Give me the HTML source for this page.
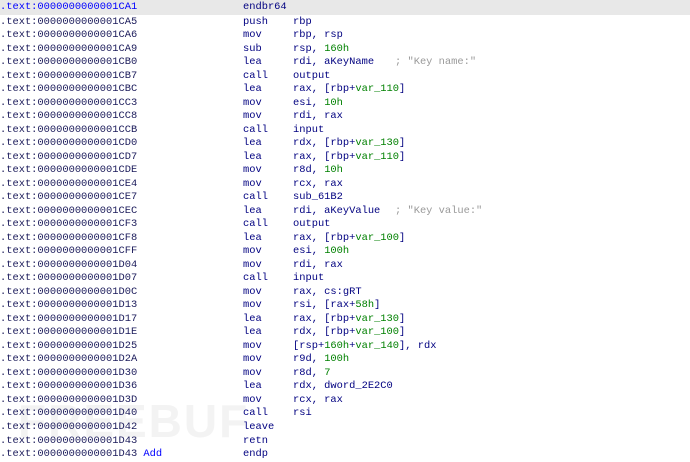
<!DOCTYPE html>
<html><head><style>
body{margin:0;padding-top:1px;background:#fff;width:690px;height:461px;overflow:hidden;font-family:"Liberation Mono",monospace;font-size:10.4px;color:#000080}
.r{height:13.52px;line-height:13.52px;white-space:pre;position:relative}
.r span{position:absolute;top:1px}
.a{left:0;color:#1a1a5a}
.m{left:243px}
.o{left:293px}
.c{left:395px;color:#999}
.g{color:#008000;font-style:normal;font-weight:normal}
.hl{background:#e8e8e8;margin-top:-1px;padding-top:1px}
.hl .a{color:#0000ff}
.wm{position:absolute;left:18px;top:394px;font:bold 46px "Liberation Sans",sans-serif;color:#f3f3f3;letter-spacing:2px;z-index:-1}
</style></head><body>
<div class="wm">FREEBUF</div>
<div class="r hl"><span class="a">.text:0000000000001CA1</span><span class="m">endbr64</span></div>
<div class="r"><span class="a">.text:0000000000001CA5</span><span class="m">push</span><span class="o">rbp</span></div>
<div class="r"><span class="a">.text:0000000000001CA6</span><span class="m">mov</span><span class="o">rbp, rsp</span></div>
<div class="r"><span class="a">.text:0000000000001CA9</span><span class="m">sub</span><span class="o">rsp, <i class="g">160h</i></span></div>
<div class="r"><span class="a">.text:0000000000001CB0</span><span class="m">lea</span><span class="o">rdi, aKeyName</span><span class="c">; "Key name:"</span></div>
<div class="r"><span class="a">.text:0000000000001CB7</span><span class="m">call</span><span class="o">output</span></div>
<div class="r"><span class="a">.text:0000000000001CBC</span><span class="m">lea</span><span class="o">rax, [rbp+<i class="g">var_110</i>]</span></div>
<div class="r"><span class="a">.text:0000000000001CC3</span><span class="m">mov</span><span class="o">esi, <i class="g">10h</i></span></div>
<div class="r"><span class="a">.text:0000000000001CC8</span><span class="m">mov</span><span class="o">rdi, rax</span></div>
<div class="r"><span class="a">.text:0000000000001CCB</span><span class="m">call</span><span class="o">input</span></div>
<div class="r"><span class="a">.text:0000000000001CD0</span><span class="m">lea</span><span class="o">rdx, [rbp+<i class="g">var_130</i>]</span></div>
<div class="r"><span class="a">.text:0000000000001CD7</span><span class="m">lea</span><span class="o">rax, [rbp+<i class="g">var_110</i>]</span></div>
<div class="r"><span class="a">.text:0000000000001CDE</span><span class="m">mov</span><span class="o">r8d, <i class="g">10h</i></span></div>
<div class="r"><span class="a">.text:0000000000001CE4</span><span class="m">mov</span><span class="o">rcx, rax</span></div>
<div class="r"><span class="a">.text:0000000000001CE7</span><span class="m">call</span><span class="o">sub_61B2</span></div>
<div class="r"><span class="a">.text:0000000000001CEC</span><span class="m">lea</span><span class="o">rdi, aKeyValue</span><span class="c">; "Key value:"</span></div>
<div class="r"><span class="a">.text:0000000000001CF3</span><span class="m">call</span><span class="o">output</span></div>
<div class="r"><span class="a">.text:0000000000001CF8</span><span class="m">lea</span><span class="o">rax, [rbp+<i class="g">var_100</i>]</span></div>
<div class="r"><span class="a">.text:0000000000001CFF</span><span class="m">mov</span><span class="o">esi, <i class="g">100h</i></span></div>
<div class="r"><span class="a">.text:0000000000001D04</span><span class="m">mov</span><span class="o">rdi, rax</span></div>
<div class="r"><span class="a">.text:0000000000001D07</span><span class="m">call</span><span class="o">input</span></div>
<div class="r"><span class="a">.text:0000000000001D0C</span><span class="m">mov</span><span class="o">rax, cs:gRT</span></div>
<div class="r"><span class="a">.text:0000000000001D13</span><span class="m">mov</span><span class="o">rsi, [rax+<i class="g">58h</i>]</span></div>
<div class="r"><span class="a">.text:0000000000001D17</span><span class="m">lea</span><span class="o">rax, [rbp+<i class="g">var_130</i>]</span></div>
<div class="r"><span class="a">.text:0000000000001D1E</span><span class="m">lea</span><span class="o">rdx, [rbp+<i class="g">var_100</i>]</span></div>
<div class="r"><span class="a">.text:0000000000001D25</span><span class="m">mov</span><span class="o">[rsp+<i class="g">160h</i>+<i class="g">var_140</i>], rdx</span></div>
<div class="r"><span class="a">.text:0000000000001D2A</span><span class="m">mov</span><span class="o">r9d, <i class="g">100h</i></span></div>
<div class="r"><span class="a">.text:0000000000001D30</span><span class="m">mov</span><span class="o">r8d, <i class="g">7</i></span></div>
<div class="r"><span class="a">.text:0000000000001D36</span><span class="m">lea</span><span class="o">rdx, dword_2E2C0</span></div>
<div class="r"><span class="a">.text:0000000000001D3D</span><span class="m">mov</span><span class="o">rcx, rax</span></div>
<div class="r"><span class="a">.text:0000000000001D40</span><span class="m">call</span><span class="o">rsi</span></div>
<div class="r"><span class="a">.text:0000000000001D42</span><span class="m">leave</span></div>
<div class="r"><span class="a">.text:0000000000001D43</span><span class="m">retn</span></div>
<div class="r"><span class="a">.text:0000000000001D43 <i style="font-style:normal;color:#0000ff">Add</i></span><span class="m">endp</span></div>
</body></html>
